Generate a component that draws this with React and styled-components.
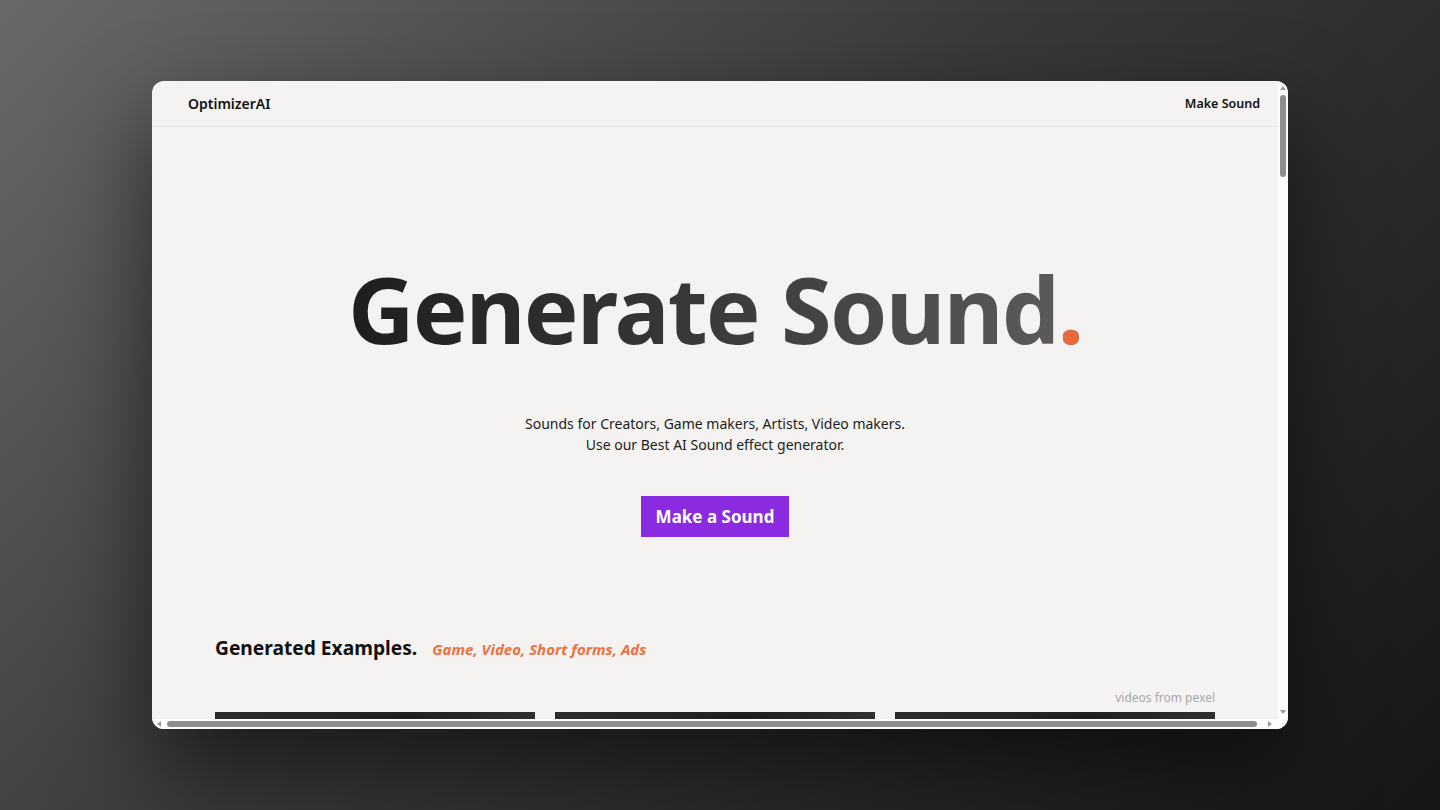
import React from 'react';
import styled, { createGlobalStyle } from 'styled-components';

const GlobalStyle = createGlobalStyle`
  html, body {
    margin: 0;
    padding: 0;
    height: 100%;
  }
  body {
    font-family: "Noto Sans", "Open Sans", sans-serif;
    background: linear-gradient(135deg, #6a6869 0%, #3b3a3b 45%, #161616 100%);
  }
  #root {
    height: 100%;
  }
`;

const Stage = styled.div`
  height: 100vh;
  display: flex;
  align-items: center;
  justify-content: center;
`;

const BrowserWindow = styled.div`
  width: 1136px;
  height: 648px;
  border-radius: 12px;
  overflow: hidden;
  background: #f4f3f1;
  box-shadow: 0 40px 90px rgba(0, 0, 0, 0.55);
  display: grid;
  grid-template-columns: 1fr 10px;
  grid-template-rows: 1fr 10px;
`;

const Viewport = styled.div`
  overflow: hidden;
  display: flex;
  flex-direction: column;
`;

const TopBar = styled.header`
  height: 45px;
  flex-shrink: 0;
  display: flex;
  align-items: center;
  justify-content: space-between;
  padding: 0 18px 0 36px;
  border-bottom: 1px solid #e7e5e2;
  font-size: 14px;
  font-weight: 600;
  color: #111;
`;

const Brand = styled.span``;

const NavLink = styled.a`
  color: #111;
  text-decoration: none;
  font-size: 12.5px;
`;

const Hero = styled.section`
  display: flex;
  flex-direction: column;
  align-items: center;
  padding-top: 136px;
`;

const Title = styled.h1`
  margin: 0;
  font-size: 92px;
  line-height: 1;
  font-weight: 700;
  letter-spacing: -1.8px;
  background: linear-gradient(90deg, #1e1e1e 0%, #3a3a3a 50%, #5d5d5d 100%);
  -webkit-background-clip: text;
  background-clip: text;
  color: transparent;
`;

const Dot = styled.span`
  -webkit-text-fill-color: #e8693c;
  color: #e8693c;
`;

const Lead = styled.p`
  margin: 58px 0 0;
  font-size: 14px;
  line-height: 21px;
  text-align: center;
  color: #1c1c1c;
`;

const CtaButton = styled.button`
  margin-top: 41px;
  width: 148px;
  height: 41px;
  border: none;
  background: #8a2be2;
  color: #fff;
  font-family: inherit;
  font-size: 17px;
  font-weight: 700;
  cursor: pointer;
`;

const Examples = styled.section`
  width: 1000px;
  margin: 97px auto 0;
`;

const ExamplesHead = styled.div`
  display: flex;
  align-items: baseline;
  gap: 15px;
`;

const ExamplesTitle = styled.h2`
  margin: 0;
  font-size: 19.2px;
  font-weight: 700;
  color: #111;
`;

const Tags = styled.span`
  font-size: 15px;
  font-weight: 700;
  font-style: italic;
  color: #f0703f;
`;

const Credit = styled.div`
  margin-top: 28px;
  text-align: right;
  font-size: 12px;
  color: #a9a9a9;
`;

const VideoRow = styled.div`
  margin-top: 6px;
  display: grid;
  grid-template-columns: repeat(3, 1fr);
  gap: 20px;
`;

const VideoCard = styled.div`
  height: 180px;
  background: linear-gradient(90deg, #2b2b2b, #1f1f1f 60%, #2f2f2f);
`;

const VTrack = styled.div`
  background: #fbfbfb;
  display: flex;
  flex-direction: column;
  align-items: center;
  padding: 5px 0 5px;
  gap: 5px;
`;

const HTrack = styled.div`
  background: #fbfbfb;
  display: flex;
  align-items: center;
  padding: 0 6px 0 5px;
  gap: 6px;
`;

const Corner = styled.div`
  background: #fbfbfb;
`;

const Thumb = styled.div`
  background: #8e8e8e;
  border-radius: 4px;
  ${({ $vertical }) =>
    $vertical
      ? 'width: 6px; height: 82px;'
      : 'height: 6px; flex: 1; margin-right: 5px;'}
`;

const Arrow = styled.div`
  width: 0;
  height: 0;
  border: 3px solid transparent;
  ${({ $dir }) => $dir === 'up' && 'border-bottom: 4px solid #9a9a9a; border-top-width: 0;'}
  ${({ $dir }) => $dir === 'down' && 'border-top: 4px solid #9a9a9a; border-bottom-width: 0; margin-top: auto;'}
  ${({ $dir }) => $dir === 'left' && 'border-right: 4px solid #9a9a9a; border-left-width: 0;'}
  ${({ $dir }) => $dir === 'right' && 'border-left: 4px solid #9a9a9a; border-right-width: 0;'}
`;

export default function App() {
  return (
    <>
      <GlobalStyle />
      <Stage>
        <BrowserWindow>
          <Viewport>
            <TopBar>
              <Brand>OptimizerAI</Brand>
              <NavLink href="#">Make Sound</NavLink>
            </TopBar>
            <Hero>
              <Title>
                Generate Sound<Dot>.</Dot>
              </Title>
              <Lead>
                Sounds for Creators, Game makers, Artists, Video makers.
                <br />
                Use our Best AI Sound effect generator.
              </Lead>
              <CtaButton>Make a Sound</CtaButton>
            </Hero>
            <Examples>
              <ExamplesHead>
                <ExamplesTitle>Generated Examples.</ExamplesTitle>
                <Tags>Game, Video, Short forms, Ads</Tags>
              </ExamplesHead>
              <Credit>videos from pexel</Credit>
              <VideoRow>
                <VideoCard />
                <VideoCard />
                <VideoCard />
              </VideoRow>
            </Examples>
          </Viewport>
          <VTrack>
            <Arrow $dir="up" />
            <Thumb $vertical />
            <Arrow $dir="down" />
          </VTrack>
          <HTrack>
            <Arrow $dir="left" />
            <Thumb />
            <Arrow $dir="right" />
          </HTrack>
          <Corner />
        </BrowserWindow>
      </Stage>
    </>
  );
}
